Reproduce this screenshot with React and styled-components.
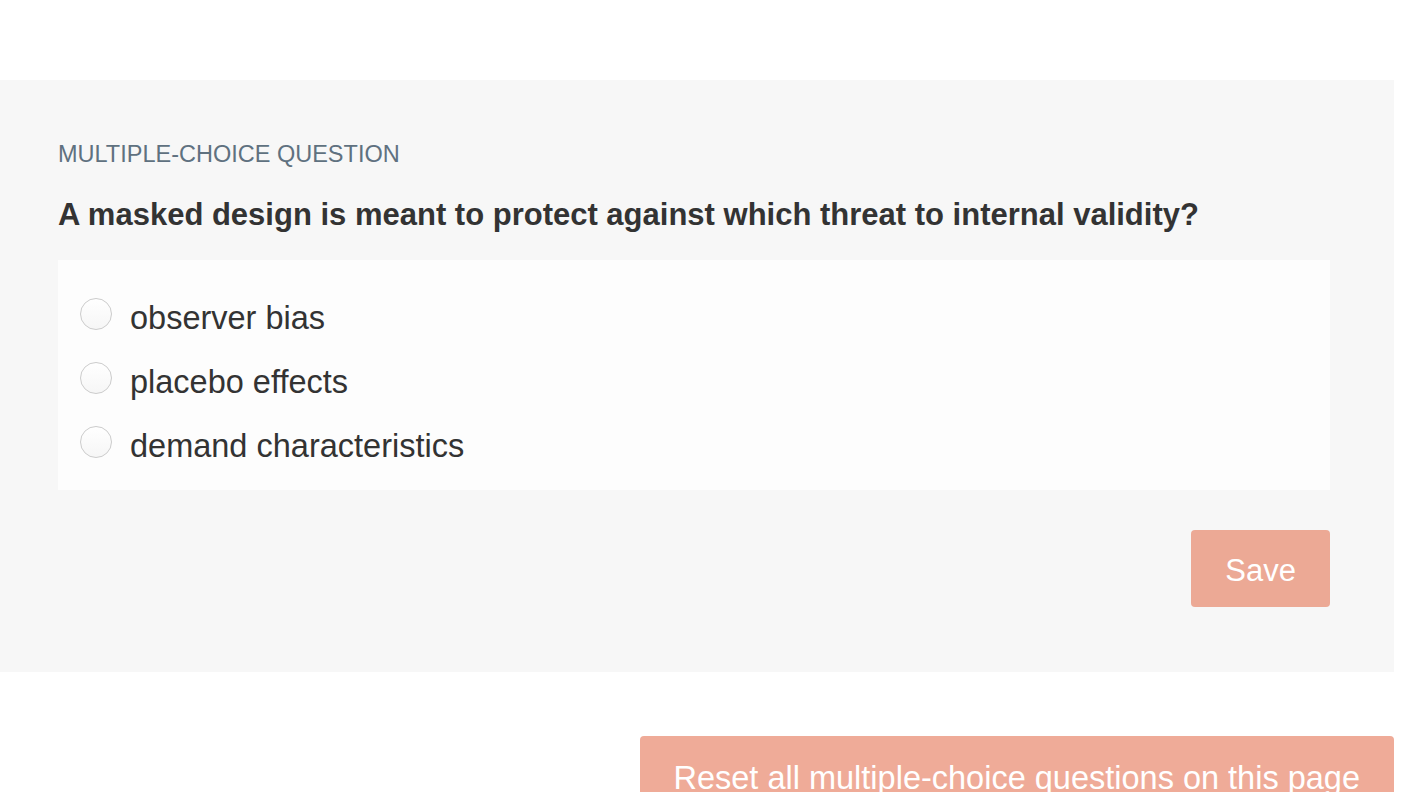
import React from 'react'
import styled, { createGlobalStyle } from 'styled-components'

const Global = createGlobalStyle`
  html, body {
    margin: 0;
    padding: 0;
    background: #ffffff;
    font-family: "Liberation Sans", Arial, Helvetica, sans-serif;
    color: #333333;
    overflow: hidden;
  }
`

const Page = styled.div`
  padding-top: 80px;
  width: 1394px;
`

const Panel = styled.section`
  background: #f7f7f7;
  padding: 60px 64px 65px 58px;
  display: flex;
  flex-direction: column;
`

const Label = styled.div`
  font-size: 23.5px;
  line-height: 28px;
  color: #5f7180;
  text-transform: uppercase;
`

const Question = styled.h2`
  margin: 29px 0 0;
  font-size: 31px;
  line-height: 36px;
  font-weight: 700;
  color: #333333;
`

const Choices = styled.div`
  margin-top: 27px;
  background: #fdfdfd;
  padding: 26px 22px 12px;
  display: flex;
  flex-direction: column;
`

const Choice = styled.label`
  display: flex;
  align-items: center;
  gap: 18px;
  height: 64px;
  font-size: 32.5px;
  color: #333333;
  cursor: pointer;
`

const Radio = styled.span`
  width: 30px;
  height: 30px;
  border-radius: 50%;
  border: 1px solid #cccccc;
  background: linear-gradient(#ffffff, #f6f6f6);
  flex-shrink: 0;
  margin-top: -8px;
`

const Actions = styled.div`
  display: flex;
  justify-content: flex-end;
  margin-top: 40px;
`

const Button = styled.button`
  border: none;
  border-radius: 4px;
  background: ${p => p.$tone || '#eca995'};
  color: #ffffff;
  font-family: inherit;
  font-size: ${p => p.$size || 31}px;
  padding: ${p => p.$pad || '0 34px'};
  height: ${p => p.$height || 'auto'};
  cursor: pointer;
`

const Footer = styled.div`
  display: flex;
  justify-content: flex-end;
  margin-top: 64px;
`

const options = ['observer bias', 'placebo effects', 'demand characteristics']

const App = () => {
  return (
    <React.Fragment>
      <Global />
      <Page>
        <Panel>
          <Label>Multiple-choice question</Label>
          <Question>A masked design is meant to protect against which threat to internal validity?</Question>
          <Choices>
            {options.map(o => (
              <Choice key={o}>
                <Radio />
                {o}
              </Choice>
            ))}
          </Choices>
          <Actions>
            <Button $height="77px" $pad="4px 34px 0">Save</Button>
          </Actions>
        </Panel>
        <Footer>
          <Button $tone="#efab98" $size={32.5} $pad="24px 34px 20px">
            Reset all multiple-choice questions on this page
          </Button>
        </Footer>
      </Page>
    </React.Fragment>
  )
}

export default App
